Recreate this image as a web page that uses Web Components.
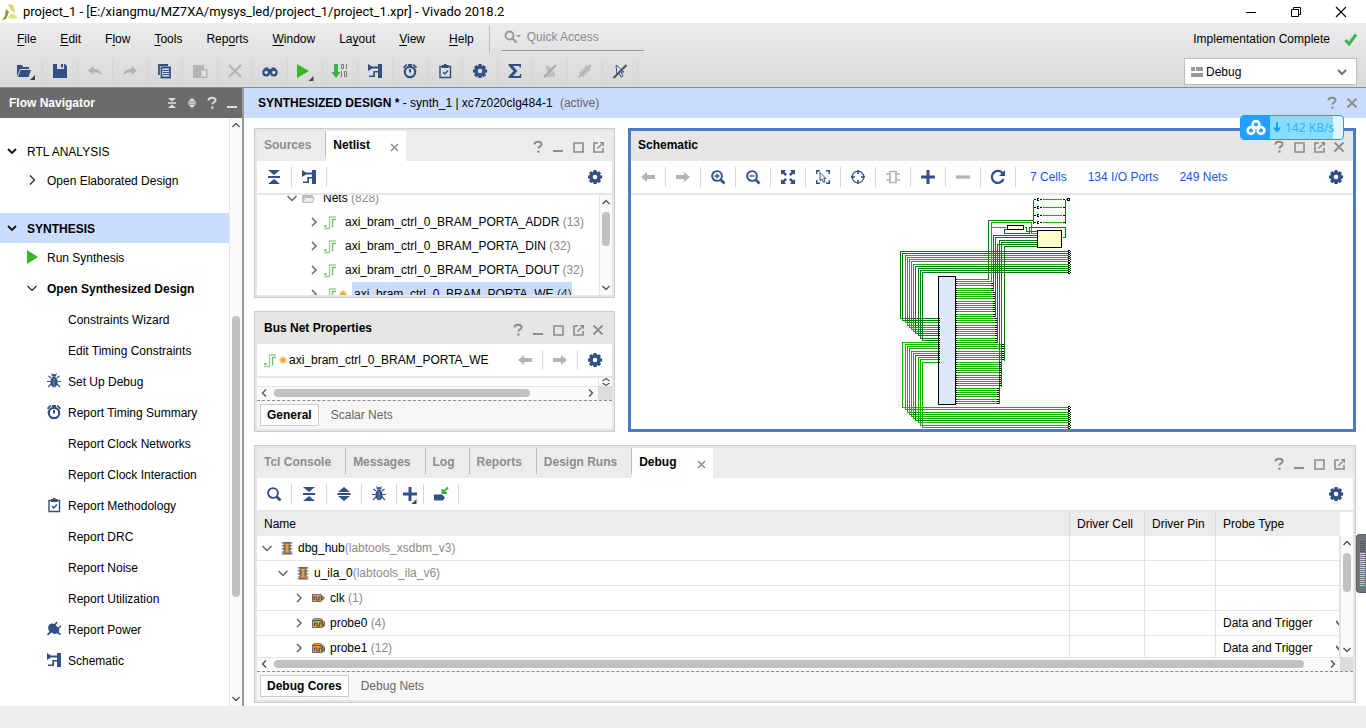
<!DOCTYPE html>
<html lang="en">
<head>
<meta charset="utf-8">
<title>project_1 - Vivado 2018.2</title>
<style>
  html, body { margin: 0; height: 100%; }
  body { font: 12px/16px "Liberation Sans", Arial, sans-serif; color: #000; background: #fff; }
</style>
</head>
<body>
<vivado-app></vivado-app>

<script>
const BASE = `
  *, *::before { box-sizing: border-box; }
  button, select, input { font: inherit; color: inherit; background: none; border: 0; margin: 0; padding: 0; border-radius: 0; outline: 0; }
  button { display: inline-flex; align-items: center; justify-content: center; white-space: nowrap; }
  :host { box-sizing: border-box; }
  [hidden] { display: none; }
`;
function define(name, css, html) {
  customElements.define(name, class extends HTMLElement {
    constructor() {
      super();
      this.attachShadow({ mode: 'open' });
    }
    connectedCallback() {
      if (this.shadowRoot.childNodes.length) return;
      const t = document.createElement('template');
      t.innerHTML = `<style>${BASE}${css}</style>` + (typeof html === 'function' ? html(this) : html);
      this.shadowRoot.append(t.content.cloneNode(true));
    }
  });
}

/* ---------- icons: [width, height, markup] ---------- */
const B = '#335085', G = '#b4b4b4';
const gear = (() => {
  let s = '';
  for (let i = 0; i < 8; i++) s += `<rect x="6" y="0" width="4" height="4" rx="1" transform="rotate(${i * 45} 8 8)" fill="${B}"/>`;
  return `<g transform="translate(1 1) scale(.88)">${s}<circle cx="8" cy="8" r="4.400" fill="none" stroke="${B}" stroke-width="3.600"/></g>`;
})();
const schem = `<path fill="${B}" d="M1 1l4 2.600h6V1h4v14h-4V9.500H8V14H2v-1.600h4.300V8H11V5.500H5L1 8z"/>`;
const clock = `<circle cx="8" cy="9" r="5.200" fill="none" stroke="${B}" stroke-width="2.200"/><path d="M8 6v3.500" stroke="${B}" stroke-width="2"/><path d="M6 1h4v2H6zM1 4l3-3 1.500 1L2 5.500zM15 4l-3-3-1.500 1L14 5.500z" fill="${B}"/>`;
const clip = `<path d="M3 3.500h10.500v11H3z" fill="none" stroke="${B}" stroke-width="1.400"/><path d="M5 2h2V1h2.500v1h2v3H5z" fill="${B}"/><path d="M6 9l1.800 2L11 7.500" fill="none" stroke="${B}" stroke-width="1.400"/>`;
const bug = `<ellipse cx="8" cy="9" rx="3.600" ry="5.400" fill="${B}"/><path d="M5.500 3.500a2.500 2.500 0 0 1 5 0z" fill="${B}"/><path d="M5 5L2.500 3M11 5l2.500-2M4.500 8.500H1M11.500 8.500H15M5 11l-3 3M11 11l3 3M6.500 2l-1-1.500M9.500 2l1-1.500" stroke="${B}" stroke-width="1.100"/><path d="M8 5v9" stroke="#93a5c6" stroke-width=".8"/>`;
const net = `<path d="M1 14.500h5.500V3H13" fill="none" stroke="#9ad29a" stroke-width="1.300"/><path d="M1 12h3V1.500h9M9 14V5.500h4" fill="none" stroke="#8bcb8b" stroke-width="0"/><path d="M9.500 13.500v-8H13M1 12h3" fill="none" stroke="#6dbd6d" stroke-width="1.300"/>`;
const spark = `<circle cx="20" cy="8" r="2.600" fill="#f5a623"/><path d="M16 8h8M20 4v8M17.200 5.200l5.600 5.600M22.800 5.200l-5.600 5.600" stroke="#f7ac35" stroke-width="1"/>`;
const corner = '<path d="M21 14v5h-5z" fill="#444"/>';
const chip = '<path d="M4 1h8v14H4z" fill="#6e6e6e"/><path d="M2 2h12M2 5.500h12M2 9h12M2 12.500h12M2 14.500h12" stroke="#6e6e6e" stroke-width="1.400"/><path d="M5.500 3h5v1.500h-1v6.500h1v2h-5v-2h1V4.500h-1z" fill="#f59a22"/>';
const mag = `<circle cx="7" cy="7" r="4.900" fill="none" stroke="${B}" stroke-width="1.900"/><path d="M10.500 10.500l4 4" stroke="${B}" stroke-width="2.600"/>`;
const chev = (d, c, w) => `<path d="${d}" fill="none" stroke="${c}" stroke-width="${w}"/>`;
const collapse = c => `<path fill="${c}" d="M2 1h12l-6 5zM2 7h12v2H2zM2 15h12l-6-5z"/>`;
const expand = c => `<path fill="${c}" d="M8 1l6 5H2zM1.500 7h13v2h-13zM8 15l6-5H2z"/>`;
const ICONS = {
  logo: [16, 18, '<path d="M6 1l5 1 2 8-4-3z" fill="#d3da58"/><path d="M4 6l3 3-3 7-4 1 3-4z" fill="#8f9a1d"/><path d="M8 11h4l4 4-5 1-5-1z" fill="#dfe588"/>'],
  open: [22, 20, `<path fill="${B}" d="M3 16V4h5l1 2h6v2H6z"/><path fill="${B}" d="M6.500 9H17l-2.500 7H4z"/>` + corner],
  save: [16, 16, `<path fill="${B}" d="M1 1h4v5h7V1h1l2 2v12H1z"/><path fill="${B}" d="M9 1h2v3.500H9z"/>`],
  undo: [16, 16, `<path fill="${G}" d="M1 7.500L6.500 3v3c5 0 7.500 2 8.500 6.500C12.500 10 10.500 9.500 6.500 9.500v2.800z"/>`],
  redo: [16, 16, `<path fill="${G}" d="M15 7.500L9.500 3v3C4.500 6 2 8 1 12.500 3.500 10 5.500 9.500 9.500 9.500v2.800z"/>`],
  copy: [16, 16, `<path d="M2 12V2h9M4.500 4.500h8.500v10H4.500z" fill="none" stroke="${B}" stroke-width="1.800"/><path d="M6 7.500h6M6 9.500h6M6 11.500h6" stroke="${B}"/>`],
  paste: [16, 16, `<path fill="${G}" d="M1 2h11v4H8v9H1z"/><path d="M8.700 6.700h6v7.600h-6z" fill="#e2e2e2" stroke="${G}" stroke-width="1.400"/>`],
  del: [16, 16, `<path d="M2 2l12 12M14 2L2 14" stroke="${G}" stroke-width="2.200"/>`],
  find: [16, 16, `<g fill="none" stroke="${B}" stroke-width="2.200"><circle cx="4.200" cy="9.500" r="2.800"/><circle cx="11.800" cy="9.500" r="2.800"/></g><path fill="${B}" d="M3 4.500h3.500v3H1.500zM9.500 4.500H13l1.500 3h-5zM6.500 6h3v3h-3z"/>`],
  run: [22, 20, '<path d="M3 3l12 7-12 7z" fill="#3cb528"/><path d="M19.500 15v5h-5z" fill="#444"/>'],
  bits: [18, 16, '<path fill="#3eb049" d="M3 1h4v8h2.500L5 15 .5 9H3z"/><g fill="none" stroke="#777"><path d="M10.500 1.500h2v4h-2zM15.500 1v5M10.500 8v6M13.500 8.500h2v5h-2z"/></g>'],
  schem: [16, 16, schem], clock: [16, 16, clock], clip: [16, 16, clip], gear: [16, 16, gear], bug: [16, 16, bug],
  sigma: [16, 16, `<path fill="${B}" d="M1.500 1H14v3.500h-1.200L12 3H6l4.500 5L6 13h6.500l.8-2h1.200l-.5 4H1.500v-1.500L6.500 8 1.500 2.500z"/>`],
  off1: [16, 16, '<path d="M3 3h4l2 2 4-3-3 5 3 3v4H2l4-4z" fill="#c0c0c0"/><path d="M2 14L14 2" stroke="#aaa" stroke-width="2"/>'],
  off2: [16, 16, '<path d="M3 10l7-7 3 3-7 7z" fill="none" stroke="#c0c0c0" stroke-width="2"/><path d="M2 14L14 2" stroke="#b0b0b0" stroke-width="1.800"/>'],
  off3: [16, 16, `<path d="M4 2l8 7H9l2 4-2 1-2-4-2 2z" fill="#e4e9f2" stroke="${B}"/><path d="M1.500 15L14.500 2" stroke="#555" stroke-width="2.200"/>`],
  check: [14, 14, '<path d="M1.500 8l3.500 4 7-9.500" fill="none" stroke="#3db54a" stroke-width="3"/>'],
  layout: [12, 12, '<path fill="#999" d="M0 1h4v4H0zM5 1h7v4H5zM0 7h12v4H0z"/>'],
  search: [18, 14, '<circle cx="5.500" cy="5.500" r="4" fill="none" stroke="#999" stroke-width="1.900"/><path d="M8.500 8.500l4 4" stroke="#999" stroke-width="2.200"/><path d="M12 5h5l-2.500 2.500z" fill="#999"/>'],
  q: [16, 16, '<path d="M4.500 5.500c0-2.400 1.500-2.700 3.500-2.700 2.300 0 3.600.9 3.600 2.500 0 2.200-3.200 2.100-3.200 4.200" fill="none" stroke="currentColor" stroke-width="2"/><path d="M7.300 11.500h2.200v2.200H7.300z" fill="currentColor"/>'],
  min: [16, 16, '<path d="M3 11h10v2H3z" fill="currentColor"/>'],
  max: [16, 16, '<path d="M4 4h9v9H4z" fill="none" stroke="currentColor" stroke-width="1.600"/>'],
  ext: [16, 16, '<path d="M8 4H4v9h9V9" fill="none" stroke="currentColor" stroke-width="1.600"/><path d="M7.500 9.500l4-4" stroke="currentColor" stroke-width="1.600"/><path d="M9.500 3H14v4.500z" fill="currentColor"/>'],
  x: [16, 16, '<path d="M3.500 3.500l9 9M12.500 3.500l-9 9" stroke="currentColor" stroke-width="1.800"/>'],
  xs: [10, 10, '<path d="M1 1l7 7M8 1L1 8" stroke="#8c8c8c" stroke-width="1.500"/>'],
  collapse: [16, 16, collapse(B)],
  expand: [16, 16, expand(B)],
  ncol: [16, 16, '<path fill="currentColor" d="M4 3h8L8 6.500zM4 7.300h8v1.400H4zM4 13h8L8 9.500z"/>'],
  nexp: [16, 16, '<path fill="currentColor" d="M8 3l4 3.500H4zM4 7.300h8v1.400H4zM8 13l4-3.500H4z"/>'],
  wmin: [12, 12, '<path d="M1 6.500h10" stroke="#000"/>'],
  wmax: [12, 12, '<path d="M1.500 3.500h7v7h-7zM3.500 3.500v-2h7v7h-2" fill="none" stroke="#000"/>'],
  wx: [12, 12, '<path d="M1 1l10 10M11 1L1 11" stroke="#000" stroke-width="1.100"/>'],
  down: [10, 10, chev('M1 3l4 4 4-4', '#111', 1.8)],
  downthin: [10, 10, chev('M.5 3L5 7.500 9.500 3', '#222', 1.2)],
  rightthin: [10, 10, chev('M3 .5L7.500 5 3 9.500', '#222', 1.2)],
  tdown: [10, 10, chev('M.5 3L5 7.500 9.500 3', '#666', 1.5)],
  tright: [10, 10, chev('M3 1l4 4-4 4', '#666', 1.5)],
  sdown: [8, 8, chev('M.5 2L4 5.500 7.500 2', '#555', 1.4)],
  sup: [8, 8, chev('M.5 6L4 2.500 7.500 6', '#555', 1.4)],
  sleft: [8, 8, chev('M6 .5L2.500 4 6 7.500', '#555', 1.4)],
  sright: [8, 8, chev('M2 .5L5.500 4 2 7.500', '#555', 1.4)],
  spin: [10, 8, chev('M1.500 3L5 .5 8.500 3M1.500 5L5 7.500 8.500 5', '#555', 1.2)],
  combo: [12, 12, chev('M2 4l4 4 4-4', '#777', 2.2)],
  play: [12, 14, '<path d="M0 0l11 7-11 7z" fill="#3cb528"/>'],
  power: [16, 16, `<path fill="${B}" d="M3 4c2-2 4-2 6-.5l4 4c1 2 0 4-2 5-2 .8-4 .3-5.500-1L2 14.500 1 13.500l2.500-3C2 8.500 1.500 6 3 4z"/><path d="M8.500 4.500L11 1M11.500 8l3.500-3M11.500 11.500l3 2" stroke="${B}" stroke-width="1.600"/>`],
  folder: [14, 12, '<path fill="#bbb" d="M1 11V1h4l1 1.500h6V5H4z"/><path d="M4.500 5.500h8.500L12 10.500H2z" fill="#eee" stroke="#bbb"/>'],
  net: [14, 16, net],
  netbug: [24, 16, net + spark],
  left: [16, 16, `<path d="M1 8l6-5v3h8v4H7v3z" fill="${G}"/>`],
  right: [16, 16, `<path d="M15 8l-6-5v3H1v4h8v3z" fill="${G}"/>`],
  zin: [16, 16, mag + `<path d="M4.500 7h5M7 4.500v5" stroke="${B}" stroke-width="1.300"/>`],
  zout: [16, 16, mag + `<path d="M4.500 7h5" stroke="${B}" stroke-width="1.400"/>`],
  mag: [16, 16, mag],
  fit: [16, 16, `<path fill="${B}" d="M1 1h5L4.500 2.700 7 5.200 5.200 7 2.700 4.500 1 6zM15 1v5l-1.700-1.500L10.800 7 9 5.200l2.500-2.500L10 1zM1 15v-5l1.700 1.500L5.200 9 7 10.800l-2.500 2.500L6 15zM15 15h-5l1.500-1.700L9 10.800 10.800 9l2.500 2.500L15 10z"/>`],
  sel: [16, 16, `<path d="M1.700 5V1.700H5M11 1.700h3.300V5M1.700 11v3.300H5M14.300 11v3.300H11" fill="none" stroke="${B}" stroke-width="1.500"/><path d="M5 3.500l6 6H8.800l1.400 3.300-1.600.7-1.400-3.300L5 11.500z" fill="#fff" stroke="${B}"/>`],
  target: [16, 16, `<circle cx="8" cy="8" r="5.800" fill="none" stroke="${B}" stroke-width="1.300"/><path d="M8 1v4M8 11v4M1 8h4M11 8h4" stroke="${B}" stroke-width="1.500"/>`],
  cell: [16, 16, `<path d="M5 2.500h6v11H5zM1 5h4M1 11h4M11 5h4M11 11h4" fill="none" stroke="${G}" stroke-width="1.700"/>`],
  plus: [16, 16, `<path d="M8 1v14M1 8h14" stroke="${B}" stroke-width="3"/>`],
  plusc: [22, 20, `<path d="M11 3v14M4 10h14" stroke="${B}" stroke-width="3"/><path d="M17.500 15v5h-5z" fill="#444"/>`],
  minus: [16, 16, `<path d="M1 8h14" stroke="${G}" stroke-width="3.200"/>`],
  reload: [16, 16, `<path d="M13 4.800A6 6 0 1 0 13.500 10" fill="none" stroke="${B}" stroke-width="2.300"/><path d="M15 1v6H9z" fill="${B}"/>`],
  probe: [16, 16, `<path d="M1 8.500h8l3 3-2 3H1z" fill="${B}"/><path d="M15 1.500l-5 5M9.500 3v4H14" fill="none" stroke="#3eb049" stroke-width="2"/>`],
  chip: [14, 14, `<g transform="scale(.88)">${chip}</g>`],
  clk: [13, 10, '<path d="M0 1h9l4 4-4 4H0z" fill="#6e6e6e"/><path d="M1 2h7.500l3 3-3 3H1z" fill="#f7a823"/><path d="M2 7V4h2.500v3H7V4h2.500v3" fill="none" stroke="#35507f" stroke-width="1.200"/>'],
  bus: [13, 12, '<path d="M2 1h7l4 4v4l-3 2H0V3z" fill="#6e6e6e"/><path d="M2.500 1.700H9l3 3-1.500 4L9 10H1V3z" fill="#f7a823"/><path d="M1 3.500h8l2 2M2.500 9V6H5v3h2.500V6H10v3" fill="none" stroke="#35507f" stroke-width="1.200"/>'],
  cloud: [22, 20, '<g fill="none" stroke="#fff" stroke-width="2.600"><circle cx="11" cy="6.500" r="3.400"/><circle cx="6" cy="12.500" r="3.400"/><circle cx="16" cy="12.500" r="3.400"/></g>'],
  dl: [8, 11, '<path d="M4 0v8M.8 5.500L4 9l3.200-3.500" fill="none" stroke="#0f9bf2" stroke-width="1.800"/>']
};
define('v-icon', ':host{display:inline-flex;flex:none} svg{display:block}', el => {
  const [w, h, m] = ICONS[el.getAttribute('name')];
  return `<svg width="${w}" height="${h}" viewBox="0 0 ${w} ${h}" aria-hidden="true">${m}</svg>`;
});
const ic = n => `<v-icon name="${n}"></v-icon>`;

/* ---------- title bar ---------- */
define('v-titlebar', `
  :host { display: flex; flex: none; align-items: center; height: 23px; padding: 0 3px 0 2px; background: #fff; font: 13px/16px Roboto, "Noto Sans", sans-serif; }
  h1 { flex: 1; margin: 0 0 0 5px; font: inherit; white-space: nowrap; }
  button { width: 45px; height: 23px; }
`, `${ic('logo')}<h1>project_1 - [E:/xiangmu/MZ7XA/mysys_led/project_1/project_1.xpr] - Vivado 2018.2</h1>
  <button aria-label="Minimize">${ic('wmin')}</button><button aria-label="Restore">${ic('wmax')}</button><button aria-label="Close">${ic('wx')}</button>`);

/* ---------- menu and main toolbar ---------- */
const menus = [['', 'F', 'ile'], ['', 'E', 'dit'], ['F', 'l', 'ow'], ['', 'T', 'ools'], ['Rep', 'o', 'rts'], ['', 'W', 'indow'], ['La', 'y', 'out'], ['', 'V', 'iew'], ['', 'H', 'elp']];
const tools = ['open', 'save', 'undo', 'redo', 'copy', 'paste', 'del', 'find', 'run', 'bits', 'schem', 'clock', 'clip', 'gear', 'sigma', 'off1', 'off2', 'off3'];
define('v-mainbar', `
  :host { display: flex; flex: none; justify-content: space-between; height: 65px; background: linear-gradient(#ececec, #d8d8d8); border-bottom: 1px solid #8c8c8c; }
  nav { display: flex; align-items: center; height: 32px; padding-left: 17px; }
  nav button { margin-right: 24px; }
  u { text-underline-offset: 2px; }
  .sep { width: 1px; height: 27px; background: #bdbdbd; margin-left: -9px; }
  .find { display: flex; align-items: center; align-self: flex-start; gap: 5px; width: 143px; height: 24px; margin: 4px 0 0 11px; padding: 0 0 4px 3px; border-bottom: 1px solid #999; }
  .find input { width: 100px; min-width: 0; }
  .find input::placeholder { color: #8c8c8c; opacity: 1; }
  .tools { display: flex; align-items: center; height: 32px; padding-left: 8px; }
  .tools button { width: 35px; height: 24px; border-right: 1px solid #d6d6d6; }
  .right { display: flex; flex-direction: column; align-items: flex-end; padding-right: 9px; }
  .status { display: flex; align-items: center; gap: 14px; height: 32px; margin-right: -1px; }
  .combo { position: relative; display: flex; align-items: center; width: 173px; height: 27px; margin-top: 3px; border: 1px solid #bdbdbd; background: #fff; }
  .combo select { width: 100%; height: 100%; padding-left: 21px; appearance: none; }
  .combo v-icon { position: absolute; pointer-events: none; }
  .combo v-icon:first-child { left: 6px; }
  .combo v-icon:last-child { right: 8px; }
`, `<div>
    <nav aria-label="Main menu">${menus.map(([a, b, c]) => `<button><span>${a}<u>${b}</u>${c}</span></button>`).join('')}<span class="sep"></span>
      <label class="find">${ic('search')}<input type="text" placeholder="Quick Access" aria-label="Quick Access"></label></nav>
    <div class="tools">${tools.map(t => `<button aria-label="${t}">${ic(t)}</button>`).join('')}</div>
  </div>
  <div class="right">
    <div class="status"><span>Implementation Complete</span>${ic('check')}</div>
    <div class="combo">${ic('layout')}<select aria-label="Layout"><option>Debug</option></select>${ic('combo')}</div>
  </div>`);

/* ---------- scroll bar: data-parts = before, thumb, after ---------- */
define('v-scrollbar', `
  :host { display: flex; flex-direction: column; flex: none; width: 13px; background: #fafafa; border-left: 1px solid #e4e4e4; }
  :host([horizontal]) { flex-direction: row; width: auto; height: 14px; border-left: 0; border-top: 1px solid #e4e4e4; }
  .a { flex: none; display: flex; width: 12px; height: 14px; align-items: center; justify-content: center; }
  .thumb { background: #c1c1c1; border-radius: 4px; width: 8px; margin: 0 2px; }
  :host([horizontal]) .thumb { width: auto; height: 8px; margin: 2px 0; }
  :host([horizontal]) .a { width: 14px; height: 12px; }
`, el => {
  const [b, t, a] = el.dataset.parts.split(','), h = el.hasAttribute('horizontal');
  return `<span class="a">${ic(h ? 'sleft' : 'sup')}</span><span style="flex:${b} 0 0px"></span><span class="thumb" style="flex:${t} 0 0px"></span><span style="flex:${a} 0 0px"></span><span class="a">${ic(h ? 'sright' : 'sdown')}</span>`;
});

/* ---------- window controls ---------- */
define('v-controls', `
  :host { display: flex; color: #8c8c8c; }
  button { width: 20px; height: 20px; }
`, el => el.dataset.icons.split(' ').map(n => `<button aria-label="${n}">${ic(n)}</button>`).join(''));

/* ---------- flow navigator ---------- */
define('v-nav-item', `
  :host { display: flex; align-items: center; height: 31px; padding-top: 2px; white-space: nowrap; }
  :host([level="0"]) { height: 30px; padding-left: 7px; }
  :host([level="1"]) { padding-left: 27px; }
  :host([level="2"]) { padding-left: 46px; }
  :host([compact]) { height: 29px; padding-top: 0; }
  :host([bold]) { font-weight: bold; }
  :host([selected]) { background: #cbddff; }
  .i { display: flex; width: 20px; padding-bottom: 2px; }
  :host([level="2"]) .i { width: 22px; }
`, el => `<span class="i">${el.getAttribute('icon') ? ic(el.getAttribute('icon')) : ''}</span><slot></slot>`);

define('v-navigator', `
  :host { display: flex; flex-direction: column; width: 244px; flex: none; border-right: 2px solid #999; background: #fff; min-height: 0; }
  header { display: flex; align-items: center; flex: none; height: 30px; padding: 0 0 0 9px; background: #6b6b6b; color: #fff; }
  h2 { flex: 1; margin: 0; font: bold 12px/16px "Liberation Sans", Arial, sans-serif; }
  v-controls { color: #ddd; }
  .body { flex: 1; display: flex; min-height: 0; }
  .list { flex: 1; padding-top: 18px; overflow: hidden; }
  .gap { height: 18px; }
`, `<header><h2>Flow Navigator</h2><v-controls data-icons="ncol nexp q min"></v-controls></header>
  <div class="body"><div class="list">
    <v-nav-item level="0" icon="down">RTL ANALYSIS</v-nav-item>
    <v-nav-item level="1" icon="rightthin" compact>Open Elaborated Design</v-nav-item>
    <div class="gap"></div>
    <v-nav-item level="0" icon="down" bold selected>SYNTHESIS</v-nav-item>
    <v-nav-item level="1" icon="play" compact>Run Synthesis</v-nav-item>
    <v-nav-item level="1" icon="downthin" bold>Open Synthesized Design</v-nav-item>
    <v-nav-item level="2">Constraints Wizard</v-nav-item>
    <v-nav-item level="2">Edit Timing Constraints</v-nav-item>
    <v-nav-item level="2" icon="bug">Set Up Debug</v-nav-item>
    <v-nav-item level="2" icon="clock">Report Timing Summary</v-nav-item>
    <v-nav-item level="2">Report Clock Networks</v-nav-item>
    <v-nav-item level="2">Report Clock Interaction</v-nav-item>
    <v-nav-item level="2" icon="clip">Report Methodology</v-nav-item>
    <v-nav-item level="2">Report DRC</v-nav-item>
    <v-nav-item level="2">Report Noise</v-nav-item>
    <v-nav-item level="2">Report Utilization</v-nav-item>
    <v-nav-item level="2" icon="power">Report Power</v-nav-item>
    <v-nav-item level="2" icon="schem">Schematic</v-nav-item>
  </div><v-scrollbar data-parts="184,281,95"></v-scrollbar></div>`);

/* ---------- dockable panel ---------- */
define('v-panel', `
  :host { display: flex; flex-direction: column; min-width: 0; min-height: 0; border: 1px solid #cdcdcd; padding: 2px; background: #e6e6e6; }
  :host([active]) { border: 3px solid #4a7bcc; padding: 0; }
  .strip { display: flex; flex: none; align-items: stretch; height: 30px; background: #ececec; }
  .strip.titled { background: #e6e6e6; }
  h2 { margin: 0; padding: 6px 0 0 7px; font: bold 12px/16px "Liberation Sans", Arial, sans-serif; }
  .tab { align-self: flex-start; height: 26px; padding: 2px 14px 0 7px; border-right: 1px solid #bdbdbd; color: #8c8c8c; font-weight: bold; }
  .tab.on { align-self: stretch; height: 30px; padding: 0 6px 2px 7px; color: #000; background: #fff; border: 0; gap: 20px; }
  .tab.on v-icon { margin-top: 5px; }
  v-controls { margin: 6px 4px 0 auto; }
  .main { flex: 1; display: flex; flex-direction: column; min-height: 0; background: #fff; }
`, el => {
  const tabs = el.dataset.tabs, on = el.dataset.on;
  return `<div class="strip ${tabs ? '' : 'titled'}">${tabs
    ? tabs.split('|').map(t => t === on ? `<button class="tab on"><span>${t}</span>${ic('xs')}</button>` : `<button class="tab">${t}</button>`).join('')
    : `<h2>${on}</h2>`}<v-controls data-icons="${el.dataset.controls}"></v-controls></div><div class="main"><slot></slot></div>`;
});

/* ---------- toolbar inside a panel ---------- */
define('v-tools', `
  :host { display: flex; flex: none; align-items: center; height: 34px; background: #fff; border-bottom: 2px solid #e6e6e6; padding-right: 9px; }
  button { width: 35px; height: 20px; border-right: 1px solid #d6d6d6; }
  button.narrow { width: 27px; }
  .push { flex: 1; display: flex; align-items: center; gap: 21px; padding-left: 14px; }
  button.last { width: 16px; border: 0; }
`, el => (el.dataset.icons || '').split(' ').filter(Boolean).map(n => `<button class="${n === 'plusc' ? 'narrow' : ''}" aria-label="${n}">${ic(n)}</button>`).join('')
  + `<div class="push"><slot></slot></div><slot name="end"></slot><button class="last" aria-label="Settings">${ic('gear')}</button>`);

/* ---------- netlist tree ---------- */
define('v-net-row', `
  :host { display: flex; align-items: center; height: 24px; white-space: nowrap; padding-left: 52px; }
  :host([root]) { padding-left: 30px; }
  .t { width: 14px; display: flex; } .n { width: 22px; display: flex; }
  :host([marked]) .n { width: 29px; }
  .label { padding: 4px 0; }
  :host([marked]) .label { background: #cbddff; padding: 4px 0 4px 2px; }
  i { font-style: normal; color: #8c8c8c; }
  :host([marked]) i { color: #333; }
`, el => `<span class="t">${ic(el.hasAttribute('root') ? 'tdown' : 'tright')}</span><span class="n">${ic(el.getAttribute('icon'))}</span><span class="label"><slot></slot> <i>${el.dataset.count}</i></span>`);
define('v-netlist', `
  :host { flex: 1; display: flex; min-height: 0; overflow: hidden; }
  .list { flex: 1; overflow: hidden; min-width: 0; }
  .scrolled { margin-top: -9px; }
`, `<div class="list"><div class="scrolled">
    <v-net-row root icon="folder" data-count="(828)">Nets</v-net-row>
    <v-net-row icon="net" data-count="(13)">axi_bram_ctrl_0_BRAM_PORTA_ADDR</v-net-row>
    <v-net-row icon="net" data-count="(32)">axi_bram_ctrl_0_BRAM_PORTA_DIN</v-net-row>
    <v-net-row icon="net" data-count="(32)">axi_bram_ctrl_0_BRAM_PORTA_DOUT</v-net-row>
    <v-net-row marked icon="netbug" data-count="(4)">axi_bram_ctrl_0_BRAM_PORTA_WE</v-net-row>
  </div></div><v-scrollbar data-parts="3,34,35"></v-scrollbar>`);

/* ---------- bottom tabs ---------- */
define('v-subtabs', `
  :host { display: flex; flex: none; align-items: center; gap: 6px; height: 29px; padding: 0 3px; background: #f7f7f7; border-top: 1px dashed #8c8c8c; }
  button { height: 22px; padding: 0 6px; color: #666; }
  button.on { border: 1px solid #cdcdcd; background: #fff; color: #000; font-weight: bold; }
`, el => el.dataset.tabs.split('|').map((t, i) => `<button class="${i ? '' : 'on'}">${t}</button>`).join(''));

/* ---------- bus net properties ---------- */
define('v-busprops', `
  :host { display: flex; flex-direction: column; }
  .name { display: flex; align-items: center; gap: 2px; margin-left: -8px; }
  .nav { display: flex; }
  .nav button { width: 35px; height: 20px; border-right: 1px solid #d6d6d6; }
  .nav button:last-child { margin-right: 9px; }
  .area { display: grid; grid-template-columns: 1fr 14px; grid-template-rows: 8px 14px; }
  .spin { display: flex; flex-direction: column; align-items: center; overflow: hidden; border-left: 1px solid #e4e4e4; }
  .cornerbox { background: #dcdcdc; }
`, `<v-tools><span class="name">${ic('netbug')}<span>axi_bram_ctrl_0_BRAM_PORTA_WE</span></span>
    <span class="nav" slot="end"><button aria-label="Back">${ic('left')}</button><button aria-label="Forward">${ic('right')}</button></span></v-tools>
  <div class="area"><div></div><div class="spin">${ic('spin')}</div><v-scrollbar horizontal data-parts="3,256,54"></v-scrollbar><div class="cornerbox"></div></div>
  <v-subtabs data-tabs="General|Scalar Nets"></v-subtabs>`);

/* ---------- schematic drawing ---------- */
define('v-schematic', `
  :host { flex: 1; display: flex; justify-content: center; align-items: flex-start; min-height: 0; overflow: hidden; background: #fff; }
  svg { display: block; flex: none; shape-rendering: crispEdges; }
`, () => {
  const paths = { dark: '', light: '', black: '' };
  const wire = (c, ...pts) => {
    paths[c] += 'M' + pts[0] + '.500 ' + pts[1] + '.500';
    for (let i = 2; i < pts.length; i += 2) paths[c] += 'L' + pts[i] + '.500 ' + pts[i + 1] + '.500';
  };
  const port = y => { paths.black += `M178 ${y - 1}.500h2M180 ${y}.500h1M178 ${y + 1}.500h2`; };
  // upper input bus
  const ux = [10, 12, 15, 17, 19, 21, 23, 25, 28, 30, 32];
  const uy = [61, 63, 65, 67, 69, 71, 74, 76, 78, 80, 82];
  const ub = [128, 130, 132, 135, 137, 139, 141, 143, 145, 148, 150];
  ux.forEach((x, i) => { wire(i > 1 && i < 7 ? 'light' : 'dark', 178, uy[i], x, uy[i], x, ub[i], 49, ub[i]); port(uy[i]); });
  // lower input bus
  const lx = [12, 15, 17, 19, 21, 23, 25, 28, 30, 32];
  const ly = [217, 219, 222, 224, 226, 228, 230, 232, 235, 237];
  const lb = [152, 154, 156, 158, 161, 163, 165, 167, 169, 172];
  lx.forEach((x, i) => { wire(i === 6 ? 'dark' : 'light', 178, ly[i], x, ly[i], x, lb[i], 49, lb[i]); port(ly[i]); });
  // output pins, grouped by the riser that collects them
  const groups = [
    [98, [89]], [101, [91]],
    [103, [93, 95, 98, 100]],
    [105, [102, 104, 106, 108, 111, 113, 115, 117, 119, 121, 124, 126]],
    [107, [128, 130, 132, 135, 137, 139, 141, 143, 145, 148, 150, 152]],
    [114, [154, 156, 158, 161, 163, 165, 167, 169]],
    [111, [172, 174, 176, 178, 180, 182, 185, 187, 189, 191, 193, 195]],
    [109, [198, 200, 202, 204, 206, 209, 211, 213]]
  ];
  groups.forEach(([x, ys], g) => ys.forEach(y => {
    wire('light', 66, y, x, y);
    wire('black', 65, y, 66, y);
    if (g > 1) wire('black', x - 3, y, x - 1, y);
  }));
  wire('dark', 98, 89, 98, 30, 143, 30);
  wire('light', 101, 91, 101, 32, 141, 32, 141, 43, 147, 43);
  wire('light', 101, 37, 117, 37);
  wire('dark', 103, 100, 103, 45, 147, 45);
  wire('dark', 105, 126, 105, 47, 147, 47);
  wire('dark', 107, 152, 107, 54, 147, 54);
  wire('dark', 109, 213, 109, 50, 147, 50);
  wire('dark', 111, 196, 111, 52, 147, 52);
  wire('dark', 114, 170, 114, 56, 147, 56);
  wire('dark', 134, 37, 136, 37, 136, 41, 147, 41);
  wire('dark', 117, 39, 114, 39, 114, 43, 139, 43, 139, 37, 175, 37, 175, 47, 172, 47);
  // constant sources at the top
  wire('dark', 143, 9, 143, 33);
  wire('dark', 175, 9, 175, 33);
  [9, 17, 25, 32].forEach(y => {
    wire('light', 152, y, 171, y);
    wire('black', 143, y, 145, y);
    wire('black', 149, y, 151, y);
    wire('black', 172, y, 174, y);
    paths.black += `M147 ${y - 1}.500h2M147 ${y + 1}.500h2M147 ${y}.500h1`;
  });
  wire('dark', 175, 9, 177, 9);
  paths.black += 'M177 8.500h3M177 10.500h3M177 9.500h1M179 9.500h1';
  [...ub, ...lb].forEach(y => wire('black', 48, y, 49, y));
  const p = (c, k) => `<path d="${paths[k]}" fill="none" stroke="${c}"/>`;
  return `<svg width="204" height="234" viewBox="0 5 204 234" role="img" aria-label="Schematic">
    ${p('#17b000', 'light')}${p('#007d0b', 'dark')}
    <g stroke="#000"><rect x="48.500" y="86.500" width="17" height="128" fill="#dde9f8"/><rect x="117.500" y="35.500" width="16" height="4" fill="#ffc"/><rect x="147.500" y="40.500" width="24" height="17" fill="#ffc"/></g>
    ${p('#000', 'black')}</svg>`;
});

/* ---------- debug cores table ---------- */
const rows = [
  [0, 'tdown', 'chip', 'dbg_hub', '(labtools_xsdbm_v3)', 0],
  [1, 'tdown', 'chip', 'u_ila_0', '(labtools_ila_v6)', 0],
  [2, 'tright', 'clk', 'clk', ' (1)', 0],
  [2, 'tright', 'bus', 'probe0', ' (4)', 1],
  [2, 'tright', 'bus', 'probe1', ' (12)', 1]
];
define('v-debug-cores', `
  :host { flex: 1; display: flex; flex-direction: column; min-height: 0; }
  .area { flex: 1; display: grid; grid-template-columns: minmax(0, 1fr) 13px; grid-template-rows: minmax(0, 1fr) 14px; min-height: 0; }
  .view { overflow: hidden; }
  table { width: 100%; table-layout: fixed; border-collapse: separate; border-spacing: 0; }
  th, td { padding: 0 0 0 7px; border-right: 1px solid #e2e2e2; text-align: left; font-weight: normal; white-space: nowrap; overflow: hidden; }
  th { height: 24px; background: #ececec; border-right-color: #d6d6d6; }
  td { height: 25px; border-bottom: 1px solid #e4e4e4; }
  th:last-child { border-right-color: #ececec; }
  .cell { display: flex; align-items: center; }
  .l0 { margin-left: -2px; } .l1 { margin-left: 14px; } .l2 { margin-left: 30px; }
  .t, .n { display: flex; width: 18px; }
  .muted { color: #8c8c8c; white-space: pre; }
  .opt { display: flex; justify-content: space-between; }
  select { appearance: none; width: 100px; height: 16px; }
  .mark { width: 3px; height: 16px; overflow: hidden; }
  .mark svg { display: block; }
  .vs { margin-top: 24px; }
  .cornerbox { background: #dcdcdc; }
`, `<div class="area"><div class="view"><table>
  <colgroup><col><col style="width:75px"><col style="width:71px"><col style="width:124px"></colgroup>
  <thead><tr><th scope="col">Name</th><th scope="col">Driver Cell</th><th scope="col">Driver Pin</th><th scope="col">Probe Type</th></tr></thead>
  <tbody>${rows.map(([l, t, i, n, m, d]) => `<tr><td><div class="cell l${l}"><span class="t">${ic(t)}</span><span class="n">${ic(i)}</span><span>${n}</span><span class="muted">${m}</span></div></td><td></td><td></td><td>${d ? `<div class="opt"><select aria-label="Probe type of ${n}"><option>Data and Trigger</option></select><span class="mark"><svg width="8" height="16"><path d="M0 6l3.500 4L7 6" fill="none" stroke="#666" stroke-width="2"/></svg></span></div>` : ''}</td></tr>`).join('')}</tbody>
  </table></div><v-scrollbar class="vs" data-parts="3,39,51"></v-scrollbar><v-scrollbar horizontal data-parts="3,1029,22"></v-scrollbar><div class="cornerbox"></div></div>
  <v-subtabs data-tabs="Debug Cores|Debug Nets"></v-subtabs>`);

/* ---------- floating desktop widgets ---------- */
define('v-netspeed', `
  :host { position: absolute; right: 22px; top: 115px; display: flex; width: 104px; height: 25px; border: 1px solid #1e9bff; border-radius: 4px; overflow: hidden; background: linear-gradient(90deg, #86defd 92px, #e4f7ff 92px); font: 12px/23px "Noto Sans", "Open Sans", sans-serif; color: #38b0f5; white-space: nowrap; }
  .c { display: flex; align-items: center; justify-content: center; width: 29px; background: #22a0ff; flex: none; }
  .s { display: flex; align-items: center; gap: 4px; padding-left: 3px; }
`, `<span class="c">${ic('cloud')}</span><span class="s">${ic('dl')}<span>142 KB/s</span></span>`);
define('v-meter', `
  :host { position: absolute; right: 0; top: 534px; width: 10px; height: 59px; padding: 6px 1px 6px 3px; border: 1px solid #585c6a; border-right: 0; border-radius: 4px 0 0 4px; background: #71757f; }
  div { height: 100%; background: repeating-linear-gradient(transparent 0 1px, #71757f 1px 2px), linear-gradient(#50535e 12px, #f1d48a 12px, #cfe39a 26px, #8fdcd0 40px); }
`, '<div></div>');

/* ---------- application ---------- */
define('vivado-app', `
  :host { display: flex; flex-direction: column; position: relative; height: 100vh; overflow: hidden; background: #eee; }
  .work { flex: 1; display: flex; min-height: 0; margin-bottom: 22px; }
  .design { flex: 1; display: flex; flex-direction: column; min-width: 0; background: #fff; }
  .head { display: flex; align-items: center; flex: none; height: 30px; padding: 0 4px 0 14px; background: #cbddff; }
  h2 { flex: 1; margin: 0; font: inherit; }
  i { font-style: normal; color: #666; margin-left: 4px; }
  .grid { flex: 1; display: grid; grid-template-columns: 361px minmax(0, 1fr); grid-template-rows: minmax(0, 304fr) minmax(0, 258fr); gap: 13px; padding: 10px 10px 3px; min-height: 0; }
  .left { display: flex; flex-direction: column; gap: 13px; min-height: 0; }
  .left v-panel:first-child { flex: 1; }
  .wide { grid-column: 1 / -1; }
  a { color: #1557ee; text-decoration: none; white-space: nowrap; }
`, `<v-titlebar></v-titlebar><v-mainbar></v-mainbar>
  <div class="work"><v-navigator></v-navigator>
    <div class="design">
      <div class="head"><h2><b>SYNTHESIZED DESIGN *</b> - synth_1 | xc7z020clg484-1 <i>(active)</i></h2><v-controls data-icons="q x"></v-controls></div>
      <div class="grid">
        <div class="left">
          <v-panel data-tabs="Sources|Netlist" data-on="Netlist" data-controls="q min max ext"><v-tools data-icons="collapse schem"></v-tools><v-netlist></v-netlist></v-panel>
          <v-panel data-on="Bus Net Properties" data-controls="q min max ext x"><v-busprops></v-busprops></v-panel>
        </div>
        <v-panel active data-on="Schematic" data-controls="q max ext x">
          <v-tools data-icons="left right zin zout fit sel target cell plus minus reload"><a href="#cells">7 Cells</a><a href="#ports">134 I/O Ports</a><a href="#nets">249 Nets</a></v-tools>
          <v-schematic></v-schematic></v-panel>
        <v-panel class="wide" data-tabs="Tcl Console|Messages|Log|Reports|Design Runs|Debug" data-on="Debug" data-controls="q min max ext">
          <v-tools data-icons="mag collapse expand bug plusc probe"></v-tools><v-debug-cores></v-debug-cores></v-panel>
      </div>
    </div>
  </div>
  <v-netspeed></v-netspeed><v-meter></v-meter>`);
</script>
</body>
</html>
